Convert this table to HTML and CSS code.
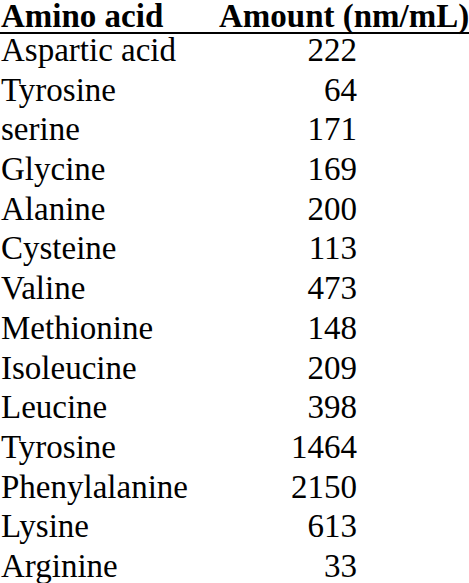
FILE: index.html
```html
<!DOCTYPE html>
<html>
<head>
<meta charset="utf-8">
<link rel="stylesheet" href="styles.css">
</head>
<body>
<div class="table">
  <div class="head">
    <div class="cell name">Amino acid</div>
    <div class="cell amount-head">Amount (nm/mL)</div>
  </div>
  <div class="body">
    <div class="cell name">Aspartic acid</div><div class="cell num">222</div>
    <div class="cell name">Tyrosine</div><div class="cell num">64</div>
    <div class="cell name">serine</div><div class="cell num">171</div>
    <div class="cell name">Glycine</div><div class="cell num">169</div>
    <div class="cell name">Alanine</div><div class="cell num">200</div>
    <div class="cell name">Cysteine</div><div class="cell num">113</div>
    <div class="cell name">Valine</div><div class="cell num">473</div>
    <div class="cell name">Methionine</div><div class="cell num">148</div>
    <div class="cell name">Isoleucine</div><div class="cell num">209</div>
    <div class="cell name">Leucine</div><div class="cell num">398</div>
    <div class="cell name">Tyrosine</div><div class="cell num">1464</div>
    <div class="cell name">Phenylalanine</div><div class="cell num">2150</div>
    <div class="cell name">Lysine</div><div class="cell num">613</div>
    <div class="cell name">Arginine</div><div class="cell num">33</div>
  </div>
</div>
</body>
</html>
```
FILE: styles.css
```css
html, body {
  margin: 0;
  padding: 0;
  background: #fff;
  overflow: hidden;
}
body {
  width: 469px;
  height: 583px;
  font-family: "Liberation Serif", "Times New Roman", serif;
  font-size: 33px;
  color: #000;
}
.table {
  width: 469px;
}
.head {
  display: grid;
  grid-template-columns: 219px 250px;
  height: 32px;
  line-height: 32px;
  font-weight: bold;
  border-bottom: 2px solid #000;
  white-space: nowrap;
}
.head .name {
  padding-left: 1px;
}
.body {
  display: grid;
  grid-template-columns: 219px 138px;
  grid-auto-rows: 39.7px;
  align-items: start;
  line-height: 32px;
  white-space: nowrap;
}
.body .name {
  padding-left: 1px;
}
.num {
  text-align: right;
}
```
